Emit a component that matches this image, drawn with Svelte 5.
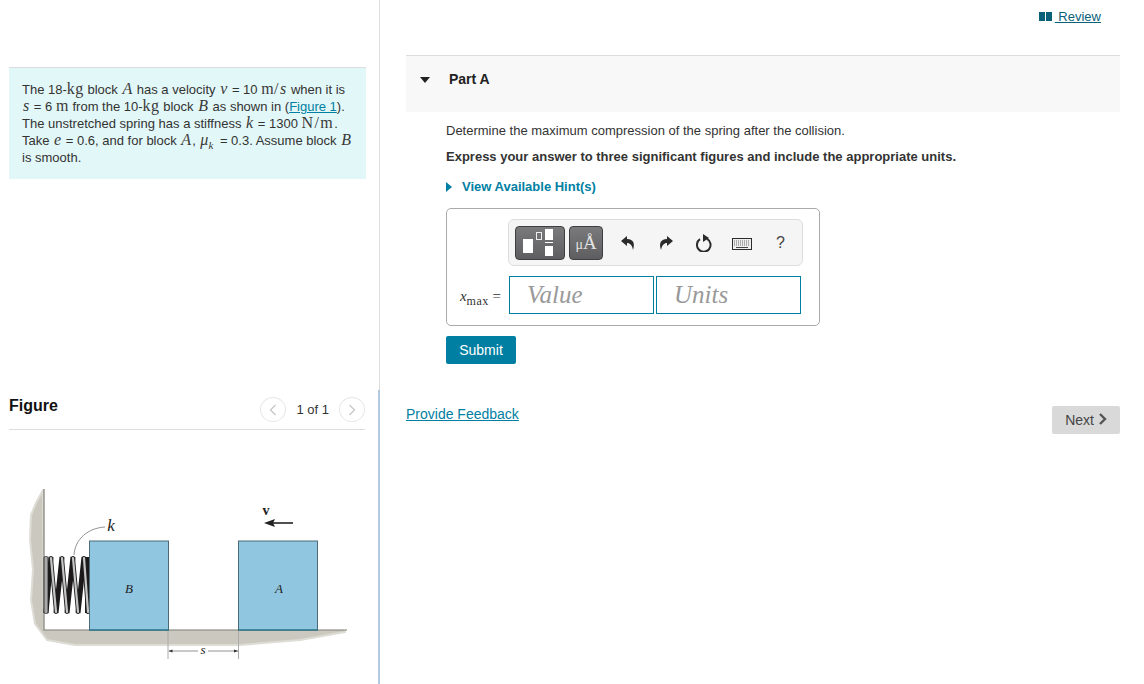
<script>
  // Mastering-style problem page: statement + figure on the left, Part A on the right.
  const coils = [
    { top: 51, bottom: 56 },
    { top: 62, bottom: 67 },
    { top: 73, bottom: 78 },
    { top: 84, bottom: 88 },
  ];
  const shadow = "M43 490 L36 503 L31 515 L30 540 L33 570 L31 600 L35 624 L47 640 L75 645 L130 645 L240 645 L300 640 L345 632 L345 628 L44 628 Z";
</script>

<div class="page">
  <section class="left">
    <div class="statement">
      The 18-<span class="mr">kg</span> block <i class="mi">A</i> has a velocity <i class="mi">v</i> = 10 <span class="mr">m/</span><i class="mi">s</i> when it is<br />
      <i class="mi">s</i> = 6 <span class="mr">m</span> from the 10-<span class="mr">kg</span> block <i class="mi">B</i> as shown in (<a href="#fig">Figure 1</a>).<br />
      The unstretched spring has a stiffness <i class="mi">k</i> = 1300 <span class="mr wide">N/m</span>.<br />
      Take <i class="mi">e</i> = 0.6, and for block <i class="mi">A</i>, <i class="mi mu">μ<sub>k</sub></i> = 0.3. Assume block <i class="mi">B</i><br />
      is smooth.
    </div>

    <div class="fig-head">
      <h2>Figure</h2>
      <div class="pager">
        <span class="circle"><svg width="8" height="12" viewBox="0 0 8 12"><path d="M6.500 1 1.500 6l5 5" /></svg></span>
        <span class="count">1 of 1</span>
        <span class="circle"><svg width="8" height="12" viewBox="0 0 8 12"><path d="M1.500 1l5 5-5 5" /></svg></span>
      </div>
    </div>

    <svg class="diagram" width="378" height="254" viewBox="0 430 378 254">
      <!-- wall and floor shadow -->
      <path d={shadow} fill="#cbc9bf" stroke="#dddcd5" stroke-width="2" stroke-linejoin="round" />
      <rect x="44" y="488" width="304" height="142" fill="#fff" />
      <path d="M44 489V630H347" fill="none" stroke="#7d7e76" stroke-width="1.200" />

      <!-- spring: dark back strands, then light front strands -->
      <path d="M46 613L51 557M56 613L62 557M67 613L73 557M78 613L84 557" stroke="#1b1919" stroke-width="5" fill="none" />
      <rect x="85" y="557" width="4" height="56" fill="#1b1919" />
      {#each coils as c}
        <path d="M{c.top} 558L{c.bottom} 612" stroke="#222" stroke-width="4" fill="none" stroke-linecap="round" />
        <path d="M{c.top} 558L{c.bottom} 612" stroke="#c6c6c6" stroke-width="2.200" fill="none" stroke-linecap="round" />
      {/each}
      <rect x="44" y="556.500" width="4" height="57" rx="1.500" fill="#a9a9a9" stroke="#222" stroke-width="0.800" />
      <path d="M74 555C75 539 88 528 105 527" fill="none" stroke="#777" stroke-width="0.800" />
      <text x="111" y="531" class="lab k">k</text>

      <!-- blocks -->
      <rect x="89.500" y="541" width="79" height="89" fill="#90c6df" stroke="#4c6a78" stroke-width="1" />
      <rect x="238.500" y="541" width="79" height="89" fill="#90c6df" stroke="#4c6a78" stroke-width="1" />
      <path d="M89 630H169M238 630H318" stroke="#16748c" stroke-width="1.200" />
      <text x="129" y="593" class="lab small">B</text>
      <text x="279" y="593" class="lab small">A</text>

      <!-- velocity -->
      <text x="266" y="515" class="vee">v</text>
      <path d="M270 523H293" stroke="#222" stroke-width="1.600" />
      <path d="M264 523l11-4-2 4 2 4z" fill="#222" />

      <!-- distance s -->
      <path d="M168 631V659M238.500 631V659" stroke="#aaa" stroke-width="1" />
      <path d="M169 651H198M208 651H238" stroke="#666" stroke-width="0.700" />
      <path d="M168.500 651l4-1.500v3zM238 651l-4-1.500v3z" fill="#333" />
      <text x="203" y="654" class="lab s">s</text>
    </svg>
  </section>

  <section class="right">
    <div class="review-row">
      <a class="review" href="#review">
        <svg width="13" height="9" viewBox="0 0 13 9"><path d="M0 0h6v9H0zM7 0h6v9H7z" fill="#0b6079" /></svg>
        <span>&nbsp;Review</span>
      </a>
    </div>

    <div class="part-head">
      <svg width="10" height="6" viewBox="0 0 10 6"><path d="M0 0h10L5 6z" fill="#222" /></svg>
      <h3>Part A</h3>
    </div>

    <div class="part-body">
      <p class="q">Determine the maximum compression of the spring after the collision.</p>
      <p class="q strong">Express your answer to three significant figures and include the appropriate units.</p>
      <a class="hints" href="#hints">
        <svg width="6" height="10" viewBox="0 0 6 10"><path d="M0 0l6 5-6 5z" fill="#007fa3" /></svg>
        View Available Hint(s)
      </a>

      <div class="answer">
        <div class="toolbar">
          <span class="tool templates">
            <svg width="38" height="27" viewBox="0 0 38 27">
              <rect x="2" y="10" width="10" height="14" fill="#fff" />
              <rect x="15.500" y="3.500" width="5" height="7" fill="none" stroke="#eee" stroke-width="1" />
              <rect x="24" y="0" width="8" height="11" fill="#fff" />
              <rect x="24" y="13" width="8" height="1" fill="#fff" />
              <rect x="24" y="17" width="8" height="10" fill="#fff" />
            </svg>
          </span>
          <span class="tool units"><span class="micro">μ</span>Å</span>
          <svg class="ico undo" width="16" height="16" viewBox="0 0 16 16"><path d="M7 1 1 6l6 5V8c3 0 5 2 6 7 2-6 1-11-6-11z" fill="#2b2b2b" /></svg>
          <svg class="ico redo" width="16" height="16" viewBox="0 0 16 16"><path d="M9 1l6 5-6 5V8c-3 0-5 2-6 7-2-6-1-11 6-11z" fill="#2b2b2b" /></svg>
          <svg class="ico reset" width="18" height="18" viewBox="0 0 18 18"><path d="M5 5.200a6.800 6.800 0 1 0 7 -0.300" fill="none" stroke="#2b2b2b" stroke-width="2" /><path d="M8 0l6 4-6 4z" fill="#2b2b2b" /></svg>
          <svg class="ico keys" width="20" height="12" viewBox="0 0 20 12"><rect x="0.500" y="0.500" width="19" height="11" fill="#eee" stroke="#2b2b2b" /><path d="M2 3h16M2 5h16M2 7h16" stroke="#666" stroke-width="1" stroke-dasharray="1 1" /><path d="M4 9.500h12" stroke="#444" /></svg>
          <span class="help">?</span>
        </div>
        <div class="entry">
          <span class="var"><i>x</i><sub>max</sub> =</span>
          <div class="box value">Value</div>
          <div class="box">Units</div>
        </div>
      </div>

      <button class="submit">Submit</button>
    </div>

    <div class="bottom">
      <a class="feedback" href="#feedback">Provide Feedback</a>
      <button class="next">Next <svg width="9" height="12" viewBox="0 0 9 12"><path d="M2 1l5 5-5 5" fill="none" stroke="#555" stroke-width="2.400" /></svg></button>
    </div>
  </section>
</div>

<style>
  :global(body) {
    margin: 0;
    background: #fff;
    font-family: "Liberation Sans", Arial, sans-serif;
    color: #333;
  }
  .page {
    display: grid;
    grid-template-columns: 380px 1fr;
    height: 684px;
    overflow: hidden;
  }
  .left {
    position: relative;
    padding-top: 67px;
    box-sizing: border-box;
    border-right: 1px solid #ddd;
  }
  .left::after {
    content: "";
    position: absolute;
    right: -1px;
    top: 390px;
    bottom: 0;
    width: 2px;
    background: #b3c9df;
  }
  .statement {
    margin: 0 13px 0 9px;
    padding: 13px 13px 0;
    height: 98px;
    background: #e2f7f7;
    border-top: 1px solid #d9dee0;
    font-size: 13px;
    line-height: 17px;
    white-space: nowrap;
  }
  .statement a { color: #007fa3; }
  .mi { font-family: "Liberation Serif", serif; font-size: 16px; line-height: 0; padding: 0 1px; color: #3a3a3a; }
  .mi sub { font-size: 11px; line-height: 0; }
  .mu { padding-right: 3px; }
  .mr { font-family: "Liberation Serif", serif; font-size: 16px; line-height: 0; letter-spacing: 0.5px; color: #3a3a3a; }
  .wide { letter-spacing: 1.4px; }
  .fig-head {
    margin: 215px 14px 0 9px;
    height: 35px;
    border-bottom: 1px solid #ddd;
    display: flex;
    justify-content: space-between;
    align-items: flex-start;
  }
  h2 { margin: 0; padding-top: 2px; font-size: 16px; line-height: 20px; color: #111; }
  .pager { display: flex; align-items: center; gap: 10px; padding-top: 3px; font-size: 13px; }
  .circle {
    width: 26px;
    height: 25px;
    border: 1px solid #e6e6e6;
    border-radius: 50%;
    display: flex;
    align-items: center;
    justify-content: center;
    box-sizing: border-box;
  }
  .circle path { fill: none; stroke: #c4c4c4; stroke-width: 1.200; }
  .diagram { display: block; }
  .lab { font-family: "Liberation Serif", serif; font-style: italic; fill: #222; text-anchor: middle; }
  .k { font-size: 17px; }
  .small { font-size: 13px; }
  .s { font-size: 13px; }
  .vee { font-family: "Liberation Serif", serif; font-weight: bold; font-size: 14px; fill: #222; text-anchor: middle; }

  .right { padding: 0 24px 0 26px; min-width: 0; }
  .review-row { height: 55px; display: flex; justify-content: flex-end; padding-right: 19px; box-sizing: border-box; padding-top: 9px; }
  .review { color: #0b6079; font-size: 13px; display: flex; align-items: center; height: 15px; text-decoration: none; }
  .review svg { margin-right: 3px; }
  .review span { text-decoration: underline; }
  .part-head {
    height: 57px;
    background: #f8f8f8;
    border-top: 1px solid #ddd;
    box-sizing: border-box;
    display: flex;
    align-items: flex-start;
    padding: 15px 0 0 14px;
    gap: 19px;
  }
  .part-head svg { margin-top: 6px; }
  h3 { margin: 0; font-size: 14px; line-height: 16px; color: #222; }
  .part-body { padding: 10px 0 0 40px; }
  .q { margin: 0 0 9px; font-size: 13px; line-height: 17px; }
  .strong { font-weight: bold; margin-bottom: 13px; }
  .hints { display: flex; align-items: center; gap: 10px; color: #007fa3; font-size: 13px; font-weight: bold; text-decoration: none; line-height: 17px; }
  .answer {
    margin-top: 13px;
    width: 374px;
    height: 118px;
    box-sizing: border-box;
    border: 1px solid #aaa;
    border-radius: 5px;
    padding: 10px 18px 0 0;
    display: flex;
    flex-direction: column;
    align-items: flex-end;
  }
  .toolbar {
    width: 295px;
    height: 47px;
    margin-right: -2px;
    box-sizing: border-box;
    background: #f5f5f5;
    border: 1px solid #ddd;
    border-radius: 6px;
    display: flex;
    align-items: center;
    padding: 0 0 0 6px;
  }
  .tool {
    height: 34px;
    box-sizing: border-box;
    background: linear-gradient(#7a7a7c, #5e5e60);
    border: 1px solid #3e3e40;
    border-radius: 4px;
    display: flex;
    align-items: center;
    justify-content: center;
    color: #e4e4e4;
  }
  .templates { width: 50px; }
  .units { width: 34px; margin-left: 4px; padding-top: 1px; font-family: "Liberation Serif", serif; font-size: 19px; align-items: baseline; line-height: 30px; }
  .micro { font-size: 14px; }
  .ico { flex: none; }
  .undo { margin-left: 17px; }
  .redo { margin-left: 22px; }
  .reset { margin-left: 21px; }
  .keys { margin-left: 19px; margin-top: 2px; }
  .help { margin-left: 24px; font-size: 16px; color: #444; }
  .entry { display: flex; align-items: center; gap: 2px; margin-top: 10px; }
  .var {
    width: 52px;
    margin-right: 6px;
    text-align: right;
    padding-top: 3px;
    font-family: "Liberation Serif", serif;
    font-size: 15px;
    white-space: nowrap;
    color: #333;
  }
  .var sub { font-size: 12px; line-height: 0; letter-spacing: 0.5px; }
  .box {
    width: 145px;
    height: 38px;
    box-sizing: border-box;
    border: 1px solid #007fa3;
    padding-left: 17px;
    font-family: "Liberation Serif", serif;
    font-style: italic;
    font-size: 25px;
    line-height: 35px;
    color: #999;
  }
  .submit {
    display: block;
    margin-top: 10px;
    width: 70px;
    height: 28px;
    padding: 0;
    border: 0;
    border-radius: 2px;
    background: #007fa3;
    color: #fff;
    font: 14px "Liberation Sans", Arial, sans-serif;
  }
  .bottom { display: flex; justify-content: space-between; align-items: flex-start; margin-top: 42px; }
  .feedback { color: #007fa3; font-size: 14px; line-height: 16px; }
  .next {
    width: 68px;
    height: 28px;
    padding: 0;
    border: 0;
    border-radius: 2px;
    background: #d9d9d9;
    color: #444;
    font: 14px "Liberation Sans", Arial, sans-serif;
  }
</style>
